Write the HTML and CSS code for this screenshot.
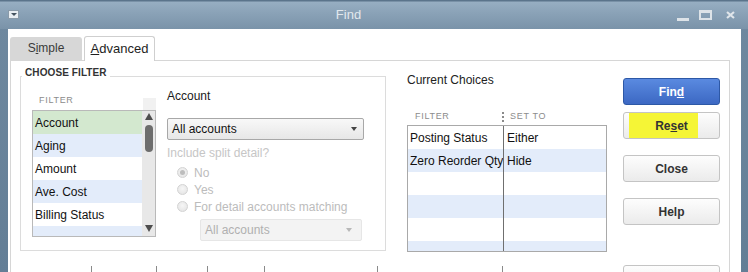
FILE: index.html
```html
<!DOCTYPE html>
<html>
<head>
<meta charset="utf-8">
<title>Find</title>
<link rel="stylesheet" href="styles.css">
</head>
<body>
<div class="window">
  <div class="titlebar">
    <div class="sysicon"><span class="sysarrow"></span></div>
    <div class="title">Find</div>
    <div class="controls">
      <span class="ctl-min"></span>
      <span class="ctl-max"></span>
      <svg class="ctl-close" width="9" height="8" viewBox="0 0 9 8"><path d="M1 1 L8 7 M8 1 L1 7" stroke="#dfe5ea" stroke-width="2.2" fill="none"/></svg>
    </div>
  </div>
  <div class="client">
    <div class="tabs">
      <div class="tab">S<u>i</u>mple</div>
      <div class="tab active"><u>A</u>dvanced</div>
    </div>
    <div class="panel">
      <div class="main">
        <div class="left">
          <div class="top-row">
            <div class="group">
              <div class="legend">CHOOSE FILTER</div>
              <div class="filter-col">
                <div class="list-head">
                  <div class="lh-label">FILTER</div>
                  <div class="lh-scroll"></div>
                </div>
                <div class="list">
                  <div class="items">
                    <div class="row sel">Account</div>
                    <div class="row alt">Aging</div>
                    <div class="row">Amount</div>
                    <div class="row alt">Ave. Cost</div>
                    <div class="row">Billing Status</div>
                    <div class="row alt"></div>
                  </div>
                  <div class="scrollbar">
                    <span class="arrow-up"></span>
                    <span class="thumb"></span>
                    <span class="spacer"></span>
                    <span class="arrow-down"></span>
                  </div>
                </div>
              </div>
              <div class="detail-col">
                <div class="label">Account</div>
                <div class="select">
                  <span>All accounts</span>
                  <span class="caret"></span>
                </div>
                <div class="sub-label">Include split detail?</div>
                <div class="radios">
                  <div class="radio-row"><span class="radio checked"></span><span class="rtext">No</span></div>
                  <div class="radio-row"><span class="radio"></span><span class="rtext">Yes</span></div>
                  <div class="radio-row"><span class="radio"></span><span class="rtext">For detail accounts matching</span></div>
                </div>
                <div class="select disabled">
                  <span>All accounts</span>
                  <span class="caret"></span>
                </div>
              </div>
            </div>
            <div class="choices">
              <div class="cc-label">Current Choices</div>
              <div class="th">
                <div class="th-filter">FILTER</div>
                <div class="th-set"><span class="dots"></span>SET TO</div>
              </div>
              <div class="table">
                <div class="trow"><div class="c1">Posting Status</div><div class="c2">Either</div></div>
                <div class="trow alt"><div class="c1">Zero Reorder Qty</div><div class="c2">Hide</div></div>
                <div class="trow"><div class="c1"></div><div class="c2"></div></div>
                <div class="trow alt"><div class="c1"></div><div class="c2"></div></div>
                <div class="trow"><div class="c1"></div><div class="c2"></div></div>
                <div class="trow alt"><div class="c1"></div><div class="c2"></div></div>
              </div>
            </div>
          </div>
          <div class="results-head">
            <div class="rh w1"></div>
            <div class="rh w2"></div>
            <div class="rh w3"></div>
            <div class="rh w4"></div>
            <div class="rh w5"></div>
            <div class="rh w6"></div>
          </div>
        </div>
        <div class="buttons">
          <div class="btn primary">Fin<u>d</u></div>
          <div class="btn reset"><span class="hl"></span><span class="btxt">Re<u>s</u>et</span></div>
          <div class="btn gap">Close</div>
          <div class="btn gap">Help</div>
          <div class="btn last"></div>
        </div>
      </div>
    </div>
  </div>
</div>
</body>
</html>
```
FILE: styles.css
```css
* { box-sizing: border-box; }
html, body { margin: 0; padding: 0; }
body {
  width: 748px;
  height: 272px;
  overflow: hidden;
  font-family: "Liberation Sans", Arial, sans-serif;
  font-size: 12px;
  color: #1a1a1a;
}
u { text-decoration: underline; text-underline-offset: 1px; }

.window {
  width: 748px;
  height: 272px;
  overflow: hidden;
  display: flex;
  flex-direction: column;
  background: linear-gradient(#6f89a0, #637e96);
}

/* title bar */
.titlebar {
  height: 29px;
  flex: none;
  display: flex;
  align-items: center;
  background: linear-gradient(#5b748b 0, #5b748b 1px, #97aec2 2px, #8aa2b7 45%, #7a93a9 100%);
}
.sysicon {
  margin-left: 8px;
  margin-top: -1px;
  width: 11px;
  height: 9px;
  background: #e9eef2;
  border: 1px solid #8a9aa8;
  display: flex;
  justify-content: center;
  align-items: center;
}
.sysarrow {
  width: 0;
  height: 0;
  border-left: 3px solid transparent;
  border-right: 3px solid transparent;
  border-top: 3px solid #44525e;
}
.title {
  flex: 1;
  text-align: center;
  font-size: 13px;
  color: #e2e8ed;
  padding-left: 4px;
}
.controls {
  display: flex;
  align-items: center;
  width: 74px;
  height: 29px;
}
.ctl-min {
  width: 12px;
  height: 3px;
  background: #dde3e8;
  margin-top: 10px;
  margin-left: 3px;
}
.ctl-max {
  width: 13px;
  height: 10px;
  border: 2px solid #dde3e8;
  border-top-width: 3px;
  margin-left: 10px;
  margin-top: 1px;
}
.ctl-close {
  margin-left: 14px;
  margin-top: 1px;
}

/* client area */
.client {
  flex: 1;
  min-height: 0;
  margin: 0 7px 0 8px;
  background: #ffffff;
  display: flex;
  flex-direction: column;
  overflow: hidden;
}
.tabs {
  height: 31px;
  flex: none;
  display: flex;
  align-items: flex-end;
  padding-left: 2px;
}
.tab {
  width: 72px;
  height: 23px;
  background: #d7d7d7;
  border-radius: 3px 3px 0 0;
  text-align: center;
  line-height: 22px;
  font-size: 12px;
  color: #3a3a3a;
}
.tab.active {
  width: 71px;
  height: 25px;
  margin-left: 2px;
  margin-bottom: -1px;
  background: #ffffff;
  border: 1px solid #cfcfcf;
  border-bottom: none;
  font-size: 13px;
  color: #1e1e1e;
  line-height: 24px;
  position: relative;
  z-index: 1;
}

.panel {
  flex: 1;
  margin-left: 2px;
  width: 720px;
  border: 1px solid #d6d6d6;
  border-bottom: none;
}
.main {
  display: flex;
  align-items: flex-start;
}
.left {
  display: flex;
  flex-direction: column;
}
.top-row {
  display: flex;
  align-items: flex-start;
}

/* group box */
.group {
  margin: 15px 0 0 9px;
  width: 366px;
  height: 175px;
  border: 1px solid #dcdcdc;
  position: relative;
  display: flex;
  padding-left: 11px;
}
.legend {
  position: absolute;
  top: -9px;
  left: 1px;
  padding: 0 3px;
  background: #ffffff;
  font-weight: bold;
  font-size: 10px;
  line-height: 10px;
  color: #333333;
  letter-spacing: 0.1px;
}
.filter-col {
  width: 124px;
  display: flex;
  flex-direction: column;
}
.list-head {
  height: 33px;
  display: flex;
}
.lh-label {
  flex: 1;
  padding: 18px 0 0 7px;
  font-size: 9px;
  line-height: 11px;
  letter-spacing: 0.7px;
  color: #8c8c8c;
}
.lh-scroll {
  width: 13px;
  align-self: flex-end;
  height: 12px;
  background: #f1f1f1;
}
.list {
  height: 127px;
  border: 1px solid #b9b9b9;
  display: flex;
}
.items {
  flex: 1;
  overflow: hidden;
}
.row {
  height: 23px;
  line-height: 24px;
  padding-left: 2px;
  font-size: 12px;
  color: #111111;
  white-space: nowrap;
}
.row.sel { background: #d3e8cf; }
.row.alt { background: #e3ecfa; }
.scrollbar {
  width: 13px;
  background: #e8e8e8;
  display: flex;
  flex-direction: column;
  align-items: center;
}
.arrow-up {
  margin-top: 2px;
  width: 0;
  height: 0;
  border-left: 4px solid transparent;
  border-right: 4px solid transparent;
  border-bottom: 7px solid #4e4e4e;
}
.thumb {
  margin-top: 5px;
  width: 8px;
  height: 27px;
  border-radius: 4px;
  background: #6d6d6d;
}
.spacer { flex: 1; }
.arrow-down {
  margin-bottom: 4px;
  width: 0;
  height: 0;
  border-left: 4px solid transparent;
  border-right: 4px solid transparent;
  border-top: 7px solid #4e4e4e;
}

.detail-col {
  margin-left: 11px;
  width: 197px;
  display: flex;
  flex-direction: column;
}
.label {
  margin-top: 12px;
  line-height: 14px;
  color: #1a1a1a;
}
.select {
  margin-top: 15px;
  height: 22px;
  border: 1px solid #a8a8a8;
  border-radius: 2px;
  background: linear-gradient(#f8f8f8, #e7e7e7);
  display: flex;
  align-items: center;
  justify-content: space-between;
  padding: 0 6px 0 4px;
  color: #111111;
}
.caret {
  width: 0;
  height: 0;
  border-left: 3.5px solid transparent;
  border-right: 3.5px solid transparent;
  border-top: 4px solid #444444;
}
.sub-label {
  margin-top: 6px;
  line-height: 14px;
  color: #c6c6c6;
}
.radios {
  margin-top: 4px;
  display: flex;
  flex-direction: column;
}
.radio-row {
  height: 17px;
  display: flex;
  align-items: center;
  padding-left: 10px;
}
.radio {
  width: 11px;
  height: 11px;
  border-radius: 50%;
  border: 1px solid #d3d3d3;
  background: radial-gradient(circle at 50% 40%, #f6f6f6, #e2e2e2);
  display: flex;
  align-items: center;
  justify-content: center;
}
.radio.checked::after {
  content: "";
  width: 5px;
  height: 5px;
  border-radius: 50%;
  background: #bdbdbd;
}
.rtext {
  margin-left: 6px;
  color: #bcbcbc;
}
.select.disabled {
  margin-top: 4px;
  margin-left: 33px;
  width: 162px;
  border: 1px solid #e6e6e6;
  background: #f3f3f3;
  color: #b0b0b0;
  padding-right: 9px;
}
.select.disabled .caret { border-top-color: #b8b8b8; }

/* current choices */
.choices {
  margin-left: 21px;
  width: 200px;
  padding-top: 12px;
  display: flex;
  flex-direction: column;
}
.cc-label {
  line-height: 14px;
  color: #222222;
}
.th {
  margin-top: 24px;
  height: 11px;
  display: flex;
  font-size: 9px;
  line-height: 11px;
  letter-spacing: 0.7px;
  color: #8c8c8c;
}
.th-filter {
  width: 95px;
  padding-left: 8px;
}
.th-set {
  display: flex;
  align-items: center;
}
.dots {
  width: 2px;
  height: 10px;
  border-left: 2px dotted #8a8a8a;
  margin-right: 6px;
}
.table {
  margin-top: 3px;
  height: 127px;
  border: 1px solid #a9a9a9;
  overflow: hidden;
}
.trow {
  height: 23px;
  display: flex;
  line-height: 24px;
}
.trow.alt { background: #e3ecfa; }
.c1 {
  width: 96px;
  border-right: 1px solid #6f6f6f;
  padding-left: 2px;
  white-space: nowrap;
  overflow: hidden;
  color: #111111;
}
.c2 {
  flex: 1;
  padding-left: 3px;
  color: #111111;
}

.results-head {
  margin-top: 14px;
  margin-left: 9px;
  height: 7px;
  display: flex;
}
.rh {
  height: 7px;
  border-right: 1px solid #8a8a8a;
}
.w1 { width: 72px; }
.w2 { width: 65px; }
.w3 { width: 51px; }
.w4 { width: 57px; }
.w5 { width: 113px; }
.w6 { width: 125px; }

/* buttons */
.buttons {
  margin: 17px 0 0 16px;
  width: 97px;
  display: flex;
  flex-direction: column;
}
.btn {
  height: 27px;
  flex: none;
  border: 1px solid #c4c4c4;
  border-radius: 3px;
  background: linear-gradient(#fdfdfd, #ebebeb);
  display: flex;
  align-items: center;
  justify-content: center;
  font-weight: bold;
  font-size: 12px;
  color: #333333;
  position: relative;
}
.btn.primary {
  border-color: #2d58a6;
  background: linear-gradient(#5a8ae0, #3c68c3);
  color: #ffffff;
}
.btn.reset { margin-top: 7px; }
.btn.gap { margin-top: 16px; }
.btn.last { margin-top: 40px; }
.hl {
  position: absolute;
  left: 5px;
  top: 0;
  width: 69px;
  height: 25px;
  background: #f5f536;
}
.btxt { position: relative; }
```
